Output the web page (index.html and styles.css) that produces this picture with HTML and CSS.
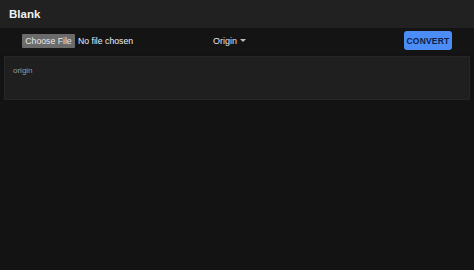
FILE: index.html
```html
<!DOCTYPE html>
<html>
<head>
<meta charset="utf-8">
<link rel="stylesheet" href="styles.css">
</head>
<body>
<header class="appbar"><h1 class="title">Blank</h1></header>
<div class="toolbar">
  <div class="file">
    <span class="file-btn">Choose File</span>
    <span class="file-name">No file chosen</span>
  </div>
  <div class="select">Origin <span class="caret"></span></div>
  <button class="convert">CONVERT</button>
</div>
<div class="editor">
  <div class="input">origin</div>
</div>
</body>
</html>
```
FILE: styles.css
```css
* { box-sizing: border-box; }
html, body { margin: 0; padding: 0; }
body {
  width: 474px;
  height: 270px;
  background: #131313;
  font-family: "Liberation Sans", Arial, sans-serif;
  color: #e6e6e6;
  overflow: hidden;
}
.appbar {
  height: 28px;
  background: #212121;
  display: flex;
  align-items: center;
  padding-left: 9px;
}
.title {
  margin: 0;
  font-size: 11.5px;
  font-weight: bold;
  color: #f2f2f2;
}
.toolbar {
  height: 25px;
  display: flex;
  align-items: center;
  padding-left: 22px;
  padding-right: 22px;
  background: #141414;
}
.file {
  display: flex;
  align-items: center;
  gap: 3px;
  font-size: 8.7px;
}
.file-btn {
  background: #6b6b6b;
  color: #e8e8e8;
  width: 53px;
  height: 14px;
  line-height: 14px;
  text-align: center;
  border-radius: 1px;
}
.file-name { color: #f0f0f0; }
.select {
  margin-left: 80px;
  font-size: 9px;
  color: #e6e6e6;
  display: flex;
  align-items: center;
  gap: 3px;
}
.caret {
  width: 0; height: 0;
  border-left: 3px solid transparent;
  border-right: 3px solid transparent;
  border-top: 3px solid #bbb;
}
.convert {
  margin-left: auto;
  height: 19px;
  width: 48px;
  padding: 0;
  border: none;
  border-radius: 3px;
  background: #4c8cf6;
  color: #0b2148;
  font-family: "Liberation Sans", Arial, sans-serif;
  font-size: 8.5px;
  font-weight: bold;
  letter-spacing: 0.2px;
}
.editor {
  padding: 3px 4px 0 4px;
}
.input {
  height: 44px;
  background: #1f1f1f;
  border: 1px solid #262626;
  padding: 9px 8px;
  font-size: 8px;
  color: #9a9a9a;
}
```
